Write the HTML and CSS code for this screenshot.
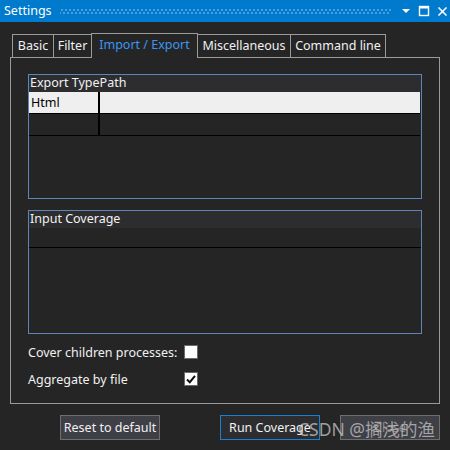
FILE: index.html
```html
<!DOCTYPE html>
<html>
<head>
<meta charset="utf-8">
<link rel="stylesheet" href="styles.css">
</head>
<body>
<div class="window">
  <div class="titlebar">
    <span class="title">Settings</span>
    <span class="dots"></span>
    <span class="ctrls">
      <svg width="10" height="10" viewBox="0 0 10 10"><path d="M1 3 L9 3 L5 7 Z" fill="#fff"/></svg>
      <svg width="12" height="12" viewBox="0 0 12 12"><rect x="1.5" y="1.5" width="9" height="9" fill="none" stroke="#fff" stroke-width="1.4"/><rect x="1" y="1" width="10" height="2.5" fill="#fff"/></svg>
      <svg width="11" height="11" viewBox="0 0 11 11"><path d="M1.5 1.5 L9.5 9.5 M9.5 1.5 L1.5 9.5" stroke="#fff" stroke-width="1.6"/></svg>
    </span>
  </div>
  <div class="tabs">
    <div class="tab t-basic">Basic</div>
    <div class="tab t-filter">Filter</div>
    <div class="tab t-import active">Import / Export</div>
    <div class="tab t-misc">Miscellaneous</div>
    <div class="tab t-cmd">Command line</div>
  </div>
  <div class="panel">
    <div class="list list-export">
      <div class="header"><span>Export Type</span><span>Path</span></div>
      <div class="row selected"><div class="c1">Html</div><div class="c2"></div></div>
      <div class="row"><div class="c1"></div><div class="c2"></div></div>
    </div>
    <div class="list list-input">
      <div class="header"><span>Input Coverage</span></div>
      <div class="row empty"></div>
    </div>
    <div class="opt first">
      <span class="label">Cover children processes:</span>
      <span class="check"></span>
    </div>
    <div class="opt">
      <span class="label">Aggregate by file</span>
      <span class="check"><svg width="12" height="12" viewBox="0 0 12 12"><path d="M2 6.5 L4.8 9.2 L10 2.8" fill="none" stroke="#111" stroke-width="2"/></svg></span>
    </div>
  </div>
  <div class="buttons">
    <button class="btn reset">Reset to default</button>
    <button class="btn run">Run Coverage</button>
    <button class="btn close">Close</button>
  </div>
  <div class="watermark">CSDN @搁浅的渔</div>
</div>
</body>
</html>
```
FILE: styles.css
```css
html, body {
  margin: 0;
  padding: 0;
  background: #252526;
}
body {
  font-family: "Noto Sans", "Open Sans", "Noto Sans CJK SC", sans-serif;
  font-size: 12px;
  color: #f1f1f1;
}
.window {
  position: relative;
  width: 450px;
  height: 450px;
  overflow: hidden;
}
.titlebar {
  height: 22px;
  background: #007acc;
  display: flex;
  align-items: center;
  padding-left: 4px;
  box-sizing: border-box;
}
.title {
  color: #fff;
  font-size: 12.5px;
  line-height: 22px;
}
.dots {
  margin-left: 8px;
  width: 331px;
  height: 5px;
  background-image:
    radial-gradient(circle, #4c9fe0 0.7px, transparent 1px),
    radial-gradient(circle, #4c9fe0 0.7px, transparent 1px);
  background-size: 4px 4px, 4px 4px;
  background-position: 0 -1px, 2px 2px;
  background-repeat: repeat-x, repeat-x;
}
.ctrls {
  display: flex;
  align-items: center;
  gap: 7px;
  margin-left: 10px;
}
.tabs {
  display: flex;
  align-items: flex-end;
  margin-left: 12px;
  margin-top: 11px;
  height: 24px;
}
.tab {
  border: 1px solid #9a9a9a;
  border-bottom: none;
  height: 23px;
  box-sizing: border-box;
  line-height: 22px;
  color: #f1f1f1;
  font-size: 12.5px;
  margin-right: -1px;
  text-align: center;
  white-space: nowrap;
}
.t-basic { width: 42px; }
.t-filter { width: 39px; }
.t-import { width: 107px; }
.t-misc { width: 94px; }
.t-cmd { width: 96px; }
.tab.active {
  height: 25px;
  color: #3a96f0;
  line-height: 22px;
  background: #252526;
  position: relative;
  z-index: 1;
  margin-bottom: -1px;
}
.panel {
  margin-left: 10px;
  width: 430px;
  height: 347px;
  box-sizing: border-box;
  border: 1px solid #9a9a9a;
  padding: 16px 18px 0 17px;
}
.list {
  border: 1px solid #5a86b8;
  box-sizing: border-box;
  width: 394px;
}
.list-export { height: 125px; }
.list-input { height: 124px; margin-top: 11px; }
.header {
  background: #2d2d30;
  height: 17px;
  line-height: 16px;
  padding-left: 1px;
  font-size: 12.5px;
}
.row {
  display: flex;
  height: 22px;
  border-bottom: 1px solid #000;
  box-sizing: border-box;
  margin-right: 1px;
}
.row .c1 {
  width: 71px;
  border-right: 2px solid #000;
  padding-left: 2px;
  line-height: 21px;
  font-size: 12.5px;
  box-sizing: border-box;
}
.row .c2 { flex: 1; }
.row.selected {
  background: #efefef;
  color: #000;
  height: 22px;
}
.row.empty { height: 20px; margin-right: 0; }
.opt {
  display: flex;
  align-items: center;
  height: 14px;
  margin-top: 13px;
  font-size: 12.5px;
}
.opt.first { margin-top: 11px; }
.label {
  width: 156px;
  color: #f1f1f1;
}
.check {
  width: 14px;
  height: 14px;
  background: #fff;
  border: 1px solid #6a6a6a;
  box-sizing: border-box;
  display: flex;
  align-items: center;
  justify-content: center;
}
.buttons {
  position: relative;
  height: 46px;
}
.btn {
  position: absolute;
  top: 11px;
  height: 25px;
  width: 100px;
  background: #3f3f46;
  border: 1px solid #6e6e6e;
  color: #f1f1f1;
  font-family: "Noto Sans", "Open Sans", sans-serif;
  font-size: 12.5px;
  padding: 0;
}
.btn.reset { left: 60px; }
.btn.run { left: 220px; border-color: #1c7fd6; background: #2d2d30; }
.btn.close { left: 340px; color: #8a8a8a; }
.watermark {
  position: absolute;
  left: 298px;
  top: 416px;
  font-family: "Noto Sans", "Noto Sans CJK SC", sans-serif;
  font-size: 17.5px;
  color: rgba(200, 200, 200, 0.75);
  pointer-events: none;
}
```
